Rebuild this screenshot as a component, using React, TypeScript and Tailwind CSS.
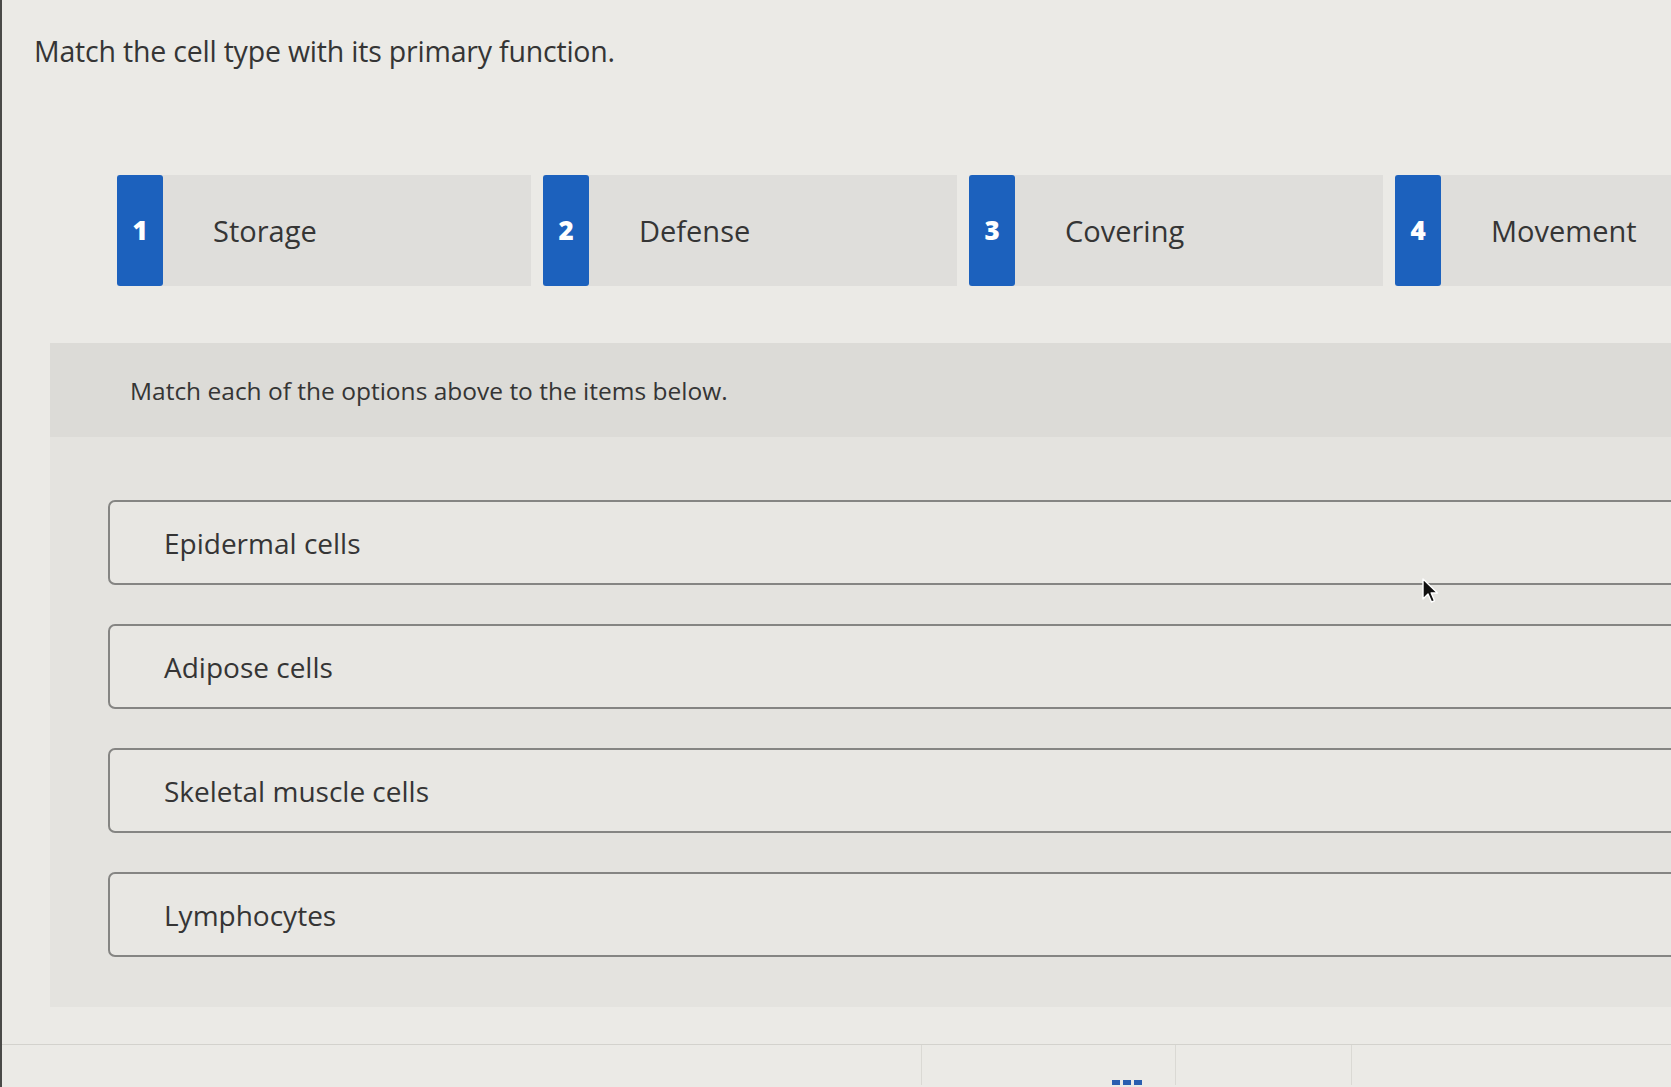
import React from 'react';

const options = [
  { n: 1, label: 'Storage' },
  { n: 2, label: 'Defense' },
  { n: 3, label: 'Covering' },
  { n: 4, label: 'Movement' },
];

const items = ['Epidermal cells', 'Adipose cells', 'Skeletal muscle cells', 'Lymphocytes'];

function Cursor() {
  return (
    <svg className="absolute left-[1419px] top-[578px]" width="18" height="28" viewBox="0 0 18 28">
      <path d="M2 1 L2 21 L7 16 L10.5 24 L13.5 22.8 L10.2 15 L16.5 15 Z" fill="#111" stroke="#fff" strokeWidth="1.4" strokeLinejoin="round" />
    </svg>
  );
}

export default function App() {
  return (
    <div className="relative h-[1087px] w-[1671px] overflow-hidden bg-[#ebeae6] font-['Open_Sans','Lato',sans-serif] text-[#353535] border-l-2 border-[#4a4a48]">
      {/* Question */}
      <h1 className="pl-[32px] pt-[33px] text-[28.5px] leading-[36px] font-normal tracking-[-0.2px]">
        Match the cell type with its primary function.
      </h1>

      {/* Options */}
      <div className="mt-[106px] flex gap-[12px] pl-[115px]">
        {options.map((o) => (
          <div key={o.n} className="flex h-[111px] w-[414px] shrink-0 items-center bg-[#dfdedb]">
            <div className="flex h-full w-[46px] items-center justify-center rounded-[3px] bg-[#1c61bd] text-[26px] font-extrabold text-white">
              {o.n}
            </div>
            <span className="pl-[50px] text-[29px]">{o.label}</span>
          </div>
        ))}
      </div>

      {/* Matching panel */}
      <div className="ml-[48px] mt-[57px] w-[1700px] bg-[#e4e3df]">
        <div className="bg-[#dcdbd7] pl-[80px] pt-[32px] pb-[30px] text-[24.5px] leading-[32px]">
          Match each of the options above to the items below.
        </div>
        <div className="flex flex-col gap-[39px] pl-[58px] pt-[63px] pb-[50px]">
          {items.map((it) => (
            <div
              key={it}
              className="flex h-[85px] w-[1600px] items-center rounded-[7px] border-2 border-[#858583] bg-[#e8e7e3] pl-[54px] text-[28px]"
            >
              {it}
            </div>
          ))}
        </div>
      </div>

      {/* Footer */}
      <div className="mt-[37px] flex h-[41px] border-t border-[#d3d2cd]">
        <div className="w-[919px] shrink-0" />
        <div className="flex w-[254px] shrink-0 items-end border-l border-[#dad9d4] pl-[190px]">
          <div className="flex gap-[3px]">
            <div className="h-[5px] w-[8px] bg-[#2a5fb0]" />
            <div className="h-[5px] w-[8px] bg-[#2a5fb0]" />
            <div className="h-[5px] w-[8px] bg-[#2a5fb0]" />
          </div>
        </div>
        <div className="w-[176px] shrink-0 border-l border-[#dad9d4]" />
        <div className="flex-1 border-l border-[#dad9d4]" />
      </div>

      <Cursor />
    </div>
  );
}
